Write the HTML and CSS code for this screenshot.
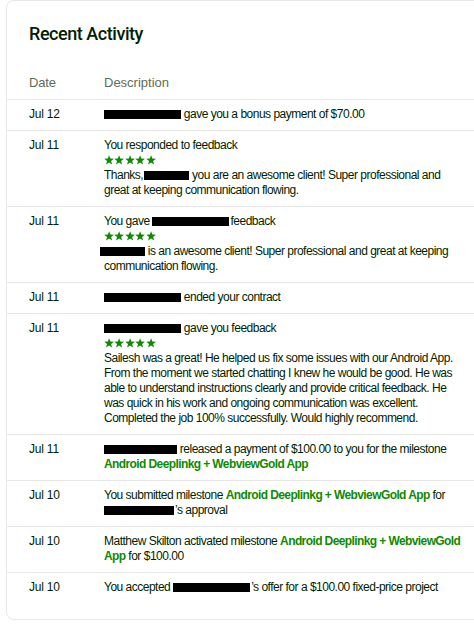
FILE: index.html
```html
<!DOCTYPE html>
<html lang="en">
<head>
<meta charset="utf-8">
<title>Recent Activity</title>
<link rel="stylesheet" href="styles.css">
</head>
<body>
<svg width="0" height="0" class="defs" aria-hidden="true">
  <defs>
    <symbol id="star" viewBox="0 0 10 10">
      <polygon points="5,0.2 6.25,3.55 9.8,3.65 7,5.85 8,9.3 5,7.3 2,9.3 3,5.85 0.2,3.65 3.75,3.55"/>
    </symbol>
  </defs>
</svg>
<section class="card">
  <h2 class="title">Recent Activity</h2>
  <div class="row head">
    <div class="date">Date</div>
    <div class="desc">Description</div>
  </div>

  <div class="row">
    <div class="date">Jul 12</div>
    <div class="desc"><span class="redact r76"></span> gave you a bonus payment of $70.00</div>
  </div>

  <div class="row">
    <div class="date">Jul 11</div>
    <div class="desc">
      <div>You responded to feedback</div>
      <div class="stars"><svg><use href="#star"/></svg><svg><use href="#star"/></svg><svg><use href="#star"/></svg><svg><use href="#star"/></svg><svg><use href="#star"/></svg></div>
      <div>Thanks,<span class="redact r45 tight"></span> you are an awesome client! Super professional and great at keeping communication flowing.</div>
    </div>
  </div>

  <div class="row">
    <div class="date">Jul 11</div>
    <div class="desc">
      <div>You gave <span class="redact r76"></span><span class="after">feedback</span></div>
      <div class="stars"><svg><use href="#star"/></svg><svg><use href="#star"/></svg><svg><use href="#star"/></svg><svg><use href="#star"/></svg><svg><use href="#star"/></svg></div>
      <div><span class="redact r45 out"></span> is an awesome client! Super professional and great at keeping communication flowing.</div>
    </div>
  </div>

  <div class="row">
    <div class="date">Jul 11</div>
    <div class="desc"><span class="redact r76"></span> ended your contract</div>
  </div>

  <div class="row">
    <div class="date">Jul 11</div>
    <div class="desc">
      <div><span class="redact r76"></span> gave you feedback</div>
      <div class="stars"><svg><use href="#star"/></svg><svg><use href="#star"/></svg><svg><use href="#star"/></svg><svg><use href="#star"/></svg><svg><use href="#star"/></svg></div>
      <div>Sailesh was a great! He helped us fix some issues with our Android App. From the moment we started chatting I knew he would be good. He was able to understand instructions clearly and provide critical feedback. He was quick in his work and ongoing communication was excellent. Completed the job 100% successfully. Would highly recommend.</div>
    </div>
  </div>

  <div class="row">
    <div class="date">Jul 11</div>
    <div class="desc"><span class="redact r72"></span> released a payment of $100.00 to you for the milestone <a class="link" href="#">Android Deeplinkg + WebviewGold App</a></div>
  </div>

  <div class="row">
    <div class="date">Jul 10</div>
    <div class="desc">You submitted milestone <a class="link" href="#">Android Deeplinkg + WebviewGold App</a> for <span class="redact r70"></span><span class="after">’s approval</span></div>
  </div>

  <div class="row">
    <div class="date">Jul 10</div>
    <div class="desc">Matthew Skilton activated milestone <a class="link" href="#">Android Deeplinkg + WebviewGold App</a> for $100.00</div>
  </div>

  <div class="row last">
    <div class="date">Jul 10</div>
    <div class="desc">You accepted <span class="redact r76"></span><span class="after">’s offer for a $100.00 fixed-price project</span></div>
  </div>
</section>
</body>
</html>
```

FILE: styles.css
```css
html, body {
  margin: 0;
  padding: 0;
  background: #ffffff;
  overflow: hidden;
}

body {
  font-family: "Liberation Sans", Arial, sans-serif;
  color: #001e00;
  width: 474px;
  height: 625px;
}

.defs {
  position: absolute;
  width: 0;
  height: 0;
}

.card {
  margin-left: 6px;
  width: 520px;
  height: 620px;
  border: 1px solid #e6e7e6;
  border-radius: 8px;
  box-sizing: border-box;
  padding-top: 21px;
}

.title {
  margin: 0 0 29px 22px;
  font-family: Roboto, "Liberation Sans", sans-serif;
  font-size: 18px;
  line-height: 24px;
  font-weight: 500;
  letter-spacing: -0.45px;
}

.row {
  display: grid;
  grid-template-columns: 75px 358px;
  padding: 7px 0 8px 22px;
  border-bottom: 1px solid #e6e7e6;
  font-size: 12px;
  line-height: 15px;
  letter-spacing: -0.5px;
}

.row.last {
  border-bottom: none;
}

.row.head {
  padding: 0 0 8px 22px;
  font-size: 13px;
  line-height: 16px;
  letter-spacing: 0;
  color: #5e6d55;
}

.date {
  letter-spacing: -0.2px;
}

.stars {
  display: flex;
  gap: 0.3px;
  height: 15px;
  align-items: center;
}

.stars svg {
  width: 10.2px;
  height: 10.2px;
  fill: #108a00;
}

.redact {
  display: inline-block;
  height: 9px;
  background: #000;
  vertical-align: -1px;
}

.r76 { width: 77px; }
.r72 { width: 73px; }
.r70 { width: 70px; }
.r45 { width: 45px; }

.tight { margin-left: 1px; }
.out { margin-left: -4px; }
.after { margin-left: 1px; }

.link {
  color: #108a00;
  font-weight: 600;
  text-decoration: none;
  letter-spacing: -0.6px;
}
```
